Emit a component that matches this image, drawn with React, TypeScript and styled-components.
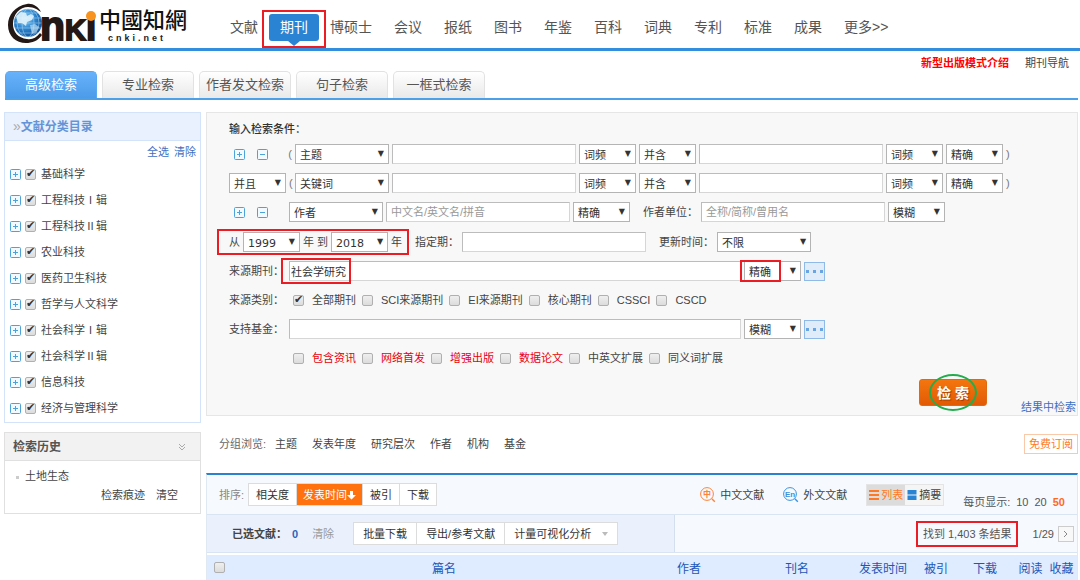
import React from "react";
import styled, { createGlobalStyle, css } from "styled-components";

const GlobalStyle = createGlobalStyle`
  *, *::before, *::after { box-sizing: border-box; }
  body {
    margin: 0;
    background: #fff;
    color: #444;
    font: 11px/14px "Liberation Sans", "Noto Sans CJK SC", sans-serif;
  }
  button, input, select { font: inherit; color: inherit; margin: 0; }
  a { color: inherit; text-decoration: none; white-space: nowrap; }
  label { white-space: nowrap; }
`;

/* red marker frame drawn over the element it belongs to */
const frame = css<{ $inset: string }>`
  position: relative;
  &::before {
    content: "";
    position: absolute;
    z-index: 1;
    inset: ${(p) => p.$inset};
    border: 2px solid #ec1c24;
    pointer-events: none;
  }
`;
const Marked = styled.div<{ $inset: string }>`
  ${frame}
  display: flex;
  align-items: center;
`;

/* ---------- header ---------- */
const Header = styled.header`
  display: flex;
  align-items: flex-start;
  height: 51px;
  border-bottom: 3px solid #338fdd;
`;
const LogoLink = styled.a`
  flex: none;
  width: 219px;
  padding-left: 7px;
`;
const LogoArt = styled.svg`
  display: block;
`;
const Nav = styled.nav`
  display: flex;
  padding-top: 14px;
`;
const NavLink = styled.a`
  padding: 0 11px;
  font-size: 14px;
  line-height: 27px;
  color: #555;
`;
const ActiveNavLink = styled(NavLink)`
  ${frame}
  color: #fff;
  background: #2b84d3;
  border-radius: 3px;
  &::after {
    content: "";
    position: absolute;
    top: 27px;
    left: 19px;
    border: 6px solid transparent;
    border-top: 5px solid #2b84d3;
    border-bottom: 0;
  }
`;
const SubLinks = styled.div`
  display: flex;
  justify-content: flex-end;
  gap: 16px;
  padding: 5px 11px 0 0;
  height: 20px;
`;
const SubLink = styled.a<{ $hot?: boolean }>`
  color: ${(p) => (p.$hot ? "#f00" : "#444")};
  font-weight: ${(p) => (p.$hot ? 700 : 400)};
`;
const Tabs = styled.nav`
  display: flex;
  gap: 5px;
  margin: 0 2px 12px 5px;
  border-bottom: 2px solid #4c9fe9;
`;
const Tab = styled.button<{ $active?: boolean }>`
  width: 92px;
  height: 27px;
  padding: 0;
  font-size: 13px;
  white-space: nowrap;
  color: ${(p) => (p.$active ? "#fff" : "#555")};
  border: 1px solid ${(p) => (p.$active ? "#5aa8f2" : "#e2e2e2")};
  border-bottom: 0;
  border-radius: 5px 5px 0 0;
  background: ${(p) =>
    p.$active ? "linear-gradient(#68b2fb, #4c9be9)" : "linear-gradient(#fff, #e9e9e9)"};
`;

/* ---------- shared controls ---------- */
const Columns = styled.div`
  display: flex;
  align-items: flex-start;
  gap: 5px;
  padding: 0 2px 0 4px;
`;
const Check = styled.input.attrs({ type: "checkbox" })`
  appearance: none;
  flex: none;
  width: 11px;
  height: 11px;
  border: 1px solid #b0b0b0;
  border-radius: 2px;
  background: linear-gradient(#efefef, #dcdcdc);
  &:checked::after {
    content: "✔";
    display: block;
    margin: -2px 0 0 0;
    font: 11px/11px "DejaVu Sans", sans-serif;
    color: #333;
  }
`;
const ToggleButton = styled.button`
  display: block;
  flex: none;
  width: 11px;
  height: 11px;
  padding: 0;
  border: 0;
  background: none;
`;
const SelectBox = styled.span<{ $wide?: boolean }>`
  display: grid;
  flex: none;
  width: ${(p) => (p.$wide ? 94 : 57)}px;
  &::after {
    content: "▼";
    grid-area: 1 / 1;
    place-self: center end;
    padding-right: 5px;
    font: 8px/10px "DejaVu Sans", sans-serif;
    color: #333;
    pointer-events: none;
  }
`;
const SelectField = styled.select`
  grid-area: 1 / 1;
  appearance: none;
  width: 100%;
  height: 20px;
  padding: 3px 4px 0;
  line-height: 15px;
  border: 1px solid #b4b4b4;
  border-radius: 0;
  background: #fff;
  color: #333;
  font-family: "DejaVu Sans", "Noto Sans CJK SC", sans-serif;
`;
const TextField = styled.input<{ $long?: boolean }>`
  flex: none;
  width: ${(p) => (p.$long ? 452 : 184)}px;
  height: 20px;
  padding: 0 ${(p) => (p.$long ? 1 : 4)}px;
  border: 1px solid #d6d6d6;
  border-top-color: #bcbcbc;
  border-left-color: #bcbcbc;
  background: #fff;
  color: #333;
  &::placeholder { color: #999; }
`;

/* ---------- sidebar ---------- */
const Sidebar = styled.aside`
  flex: none;
  width: 197px;
`;
const Box = styled.section<{ $blue?: boolean }>`
  border: 1px solid ${(p) => (p.$blue ? "#d3e3f9" : "#e0e0e0")};
  margin-bottom: 9px;
`;
const BoxHead = styled.header<{ $blue?: boolean }>`
  display: flex;
  align-items: center;
  height: 28px;
  padding: 0 14px 0 8px;
  background: ${(p) => (p.$blue ? "#e8f1fd" : "#f2f2f2")};
  border-bottom: 1px solid ${(p) => (p.$blue ? "#d3e3f9" : "#e0e0e0")};
`;
const BoxTitle = styled.h2<{ $blue?: boolean }>`
  flex: 1;
  margin: 0;
  font-size: 12px;
  line-height: 16px;
  color: ${(p) => (p.$blue ? "#6594d6" : "#555")};
`;
const Guillemet = styled.span`
  font-size: 14px;
  font-weight: 400;
  color: #aaa;
`;
const PickLinks = styled.div`
  display: flex;
  justify-content: flex-end;
  gap: 5px;
  padding: 4px 4px 2px;
  color: #3f6fc0;
`;
const Tree = styled.ul`
  list-style: none;
  margin: 0;
  padding: 0 5px 1px;
`;
const TreeItem = styled.li`
  display: flex;
  align-items: center;
  gap: 4px;
  height: 26px;
`;
const TreeLabel = styled.label`
  display: flex;
  align-items: center;
  gap: 5px;
`;
const History = styled.div`
  padding: 8px 22px 11px 11px;
`;
const HistoryLinks = styled.div`
  display: flex;
  justify-content: flex-end;
  gap: 11px;
  padding-top: 5px;
`;
const Dot = styled.span`
  display: inline-block;
  width: 3px;
  height: 3px;
  margin-right: 6px;
  vertical-align: middle;
  background: #ccc;
`;

/* ---------- search panel ---------- */
const Main = styled.main`
  flex: 1;
  min-width: 0;
`;
const Panel = styled.form`
  border: 1px solid #e6e6e6;
  background: #f8f8f8;
  padding: 9px 1px 1px 22px;
`;
const PanelTitle = styled.h1`
  margin: 0 0 8px;
  font-size: 11px;
  line-height: 14px;
  font-weight: 500;
  color: #333;
`;
const Rows = styled.div`
  display: flex;
  flex-direction: column;
  gap: 9px;
  margin-bottom: 10px;
`;
const Row = styled.div`
  display: flex;
  align-items: center;
  height: 20px;
  gap: 3px;
`;
const Lead = styled.div<{ $paren?: boolean }>`
  display: flex;
  align-items: center;
  justify-content: space-between;
  flex: none;
  width: ${(p) => (p.$paren ? 63 : 57)}px;
  gap: 3px;
`;
const Toggles = styled.div`
  display: flex;
  gap: 12px;
  padding-left: 5px;
`;
const Paren = styled.span`
  color: #777;
`;
const Label = styled.label<{ $first?: boolean }>`
  flex: none;
  ${(p) => (p.$first ? "width: 57px;" : "margin-left: 10px;")}
`;
const YearRange = styled(Marked)`
  gap: 3px;
`;
const Options = styled.div<{ $indent?: boolean }>`
  display: flex;
  gap: 6px;
  padding-left: ${(p) => (p.$indent ? 64 : 4)}px;
`;
const Option = styled.label<{ $hot?: boolean }>`
  display: flex;
  align-items: center;
  gap: 8px;
  color: ${(p) => (p.$hot ? "#e8000b" : "#444")};
`;
const MoreButton = styled.button`
  display: flex;
  align-items: center;
  justify-content: center;
  gap: 4px;
  width: 21px;
  height: 19px;
  padding: 0;
  border: 1px solid #8fb9e6;
  background: #e0ecfa;
`;
const MoreDot = styled.i`
  width: 3px;
  height: 3px;
  background: #6aa5e3;
`;
const PanelFooter = styled.div`
  display: flex;
  justify-content: flex-end;
  align-items: flex-end;
  gap: 34px;
  padding-top: 1px;
`;
const SearchButton = styled.button`
  position: relative;
  width: 68px;
  height: 27px;
  margin-bottom: 8px;
  padding: 0;
  border: 1px solid #e06a12;
  border-radius: 3px;
  background: linear-gradient(#f4760f, #e25a04);
  color: #fff;
  font-size: 14px;
  font-weight: 700;
  line-height: 20px;
  text-shadow: 1px 1px 1px #a33c00;
  &::after {
    content: "";
    position: absolute;
    inset: -6px 9px;
    border: 2px solid #22ad4c;
    border-radius: 50%;
  }
`;
const BlueLink = styled.a`
  color: #3f6fc0;
`;

/* ---------- results ---------- */
const GroupBar = styled.div`
  display: flex;
  align-items: center;
  gap: 15px;
  padding-left: 13px;
  margin: 18px 0 19px;
`;
const GroupCaption = styled.span`
  margin-right: -6px;
  color: #666;
`;
const Subscribe = styled.button`
  margin-left: auto;
  height: 20px;
  padding: 0 4px;
  border: 1px solid #fbc9aa;
  background: #fff;
  color: #ff7a26;
`;
const Results = styled.section`
  border: 1px solid #e0e8f4;
  border-top: 2px solid #2a82cf;
  border-bottom: 0;
`;
const SortBar = styled.div`
  display: flex;
  align-items: center;
  height: 40px;
  padding: 0 12px;
  background: #f6f9fe;
  border-bottom: 1px solid #d8e3f4;
`;
const Caption = styled.span`
  color: #888;
  margin-right: 4px;
`;
const Segments = styled.div`
  display: flex;
  border: 1px solid #dcdcdc;
`;
const Segment = styled.button<{ $active?: boolean; $roomy?: boolean }>`
  display: flex;
  align-items: center;
  height: 21px;
  padding: 0 ${(p) => (p.$roomy ? 9 : p.$active ? 6 : 7)}px;
  border: 0;
  border-left: 1px solid #dcdcdc;
  background: ${(p) => (p.$active ? "#ff700f" : "#fff")};
  color: ${(p) => (p.$active ? "#fff" : "#333")};
  white-space: nowrap;
  &:first-child { border-left: 0; }
`;
const SortTools = styled.div`
  display: flex;
  align-items: center;
  gap: 19px;
  margin-left: auto;
`;
const LangLink = styled.a`
  display: flex;
  align-items: center;
  gap: 4px;
`;
const ViewSwitch = styled.div`
  display: flex;
  border: 1px solid #e4e4e4;
`;
const ViewButton = styled.button<{ $active?: boolean }>`
  display: flex;
  align-items: center;
  gap: 2px;
  height: 20px;
  padding: 0 2px;
  border: 0;
  background: ${(p) => (p.$active ? "#dcdcdc" : "#f5f5f5")};
  color: ${(p) => (p.$active ? "#ff7a26" : "#444")};
`;
const PerPage = styled.div`
  display: flex;
  gap: 6px;
  padding-top: 14px;
  color: #555;
`;
const PerPageLink = styled.a<{ $active?: boolean }>`
  ${(p) => p.$active && "color: #ff6a1a; font-weight: 700;"}
`;
const ActionBar = styled.div`
  display: flex;
  height: 38px;
  margin-bottom: 2px;
  border-bottom: 1px solid #d8e3f4;
  background: #f6f9fe;
`;
const Actions = styled.div`
  display: flex;
  align-items: center;
  flex: 1;
  padding-left: 25px;
  background: #eaf1fd;
  border-right: 1px solid #d3dfef;
`;
const Chosen = styled.strong`
  color: #444;
`;
const ChosenCount = styled.strong`
  margin: 0 14px 0 5px;
  color: #2e63b8;
`;
const Clear = styled.a`
  margin-right: 19px;
  color: #999;
`;
const Caret = styled.i`
  margin-left: 11px;
  border: 3px solid transparent;
  border-top: 4px solid #bbb;
  border-bottom: 0;
`;
const Pager = styled.div`
  display: flex;
  align-items: center;
  justify-content: flex-end;
  flex: none;
  width: 402px;
  padding-right: 3px;
  color: #555;
`;
const Found = styled(Marked)`
  margin-right: 21px;
  white-space: pre;
`;
const NextButton = styled.button`
  display: grid;
  place-items: center;
  width: 16px;
  height: 16px;
  margin-left: 4px;
  padding: 0;
  border: 1px solid #ccc;
  background: #f8f8f8;
`;
const ResultTable = styled.table`
  width: 100%;
  table-layout: fixed;
  border-collapse: collapse;
  background: #dfebfe;
`;
const Th = styled.th<{ $w?: number }>`
  ${(p) => p.$w && `width: ${p.$w}px;`}
  height: 25px;
  padding: 3px 0 0;
  font-size: 12px;
  line-height: 16px;
  font-weight: 400;
  white-space: nowrap;
  color: #1e56b8;
`;
const ThCheck = styled(Th)`
  padding: 3px 0 0 7px;
  text-align: left;
`;

function Logo() {
  return (
    <LogoArt width="190" height="47" viewBox="0 0 190 47" role="img" aria-label="CNKI 中國知網">
      <defs>
        <radialGradient id="sea" cx="40%" cy="35%" r="70%">
          <stop offset="0" stopColor="#8fd0f4" />
          <stop offset="0.5" stopColor="#2f86cf" />
          <stop offset="1" stopColor="#0d4b96" />
        </radialGradient>
      </defs>
      <path d="M34 12 C31 6 25 3 20 4 C8 6 1 15 1 25 C1 36 9 43 19 43 C25 43 31 41 35 35 L33 33 C29 38 25 40 20 39 C11 38 6 32 6 24 C6 14 13 7 21 7 C27 7 31 10 34 12 Z" fill="#231815" />
      <circle cx="21" cy="23" r="14" fill="url(#sea)" />
      <g fill="none" stroke="#b9e2f8" strokeWidth="0.7" opacity="0.7">
        <ellipse cx="21" cy="23" rx="6" ry="14" />
        <ellipse cx="21" cy="23" rx="11" ry="14" />
        <path d="M8 18h26M7 23h28M8 28h26M11 33h20M11 13h20" />
      </g>
      <path d="M9 16l5-4 5 1 1 3 4-2 3 2-2 4-5 2-1 4-4-3-4 0z" fill="#e6f6fd" opacity="0.85" />
      <path d="M23 25l5-1 4 3-3 5-4 2-1-4z" fill="#d2edfa" opacity="0.6" />
      <g fill="#231815" stroke="#231815" strokeWidth="1.8" fontFamily="'Liberation Sans', sans-serif" fontWeight="700">
        <text x="33" y="40" fontSize="41">n</text>
        <text x="58" y="40" fontSize="29">K</text>
        <text x="79" y="40" fontSize="37">i</text>
      </g>
      <rect x="78" y="8" width="12" height="11" fill="#fff" />
      <circle cx="84" cy="16" r="5" fill="#f7931e" />
      <text x="92" y="28" fontSize="22" fontWeight="500" fill="#111" fontFamily="'Noto Sans CJK TC', sans-serif">中國知網</text>
      <text x="101" y="41" fontSize="9" fontWeight="700" letterSpacing="3" fill="#222" fontFamily="'Liberation Sans', sans-serif">cnki.net</text>
    </LogoArt>
  );
}

function Toggle({ minus = false, name }: { minus?: boolean; name: string }) {
  return (
    <ToggleButton type="button" aria-label={name}>
      <svg width="11" height="11" viewBox="0 0 11 11" fill="none" stroke="#4ba3d9">
        <rect x="0.5" y="0.5" width="10" height="10" rx="1" fill="#f2faff" />
        <path d={minus ? "M3 5.5h5" : "M3 5.5h5M5.5 3v5"} />
      </svg>
    </ToggleButton>
  );
}

function Select({ options, wide, label }: { options: string[]; wide?: boolean; label: string }) {
  return (
    <SelectBox $wide={wide}>
      <SelectField aria-label={label}>
        {options.map((o) => (
          <option key={o}>{o}</option>
        ))}
      </SelectField>
    </SelectBox>
  );
}

function More({ name }: { name: string }) {
  return (
    <MoreButton type="button" aria-label={name}>
      <MoreDot />
      <MoreDot />
      <MoreDot />
    </MoreButton>
  );
}

function TermFields({ field }: { field: string }) {
  return (
    <>
      <Select wide options={[field]} label="检索项" />
      <TextField aria-label="检索词" />
      <Select options={["词频"]} label="词频" />
      <Select options={["并含"]} label="逻辑" />
      <TextField aria-label="第二检索词" />
      <Select options={["词频"]} label="第二词频" />
      <Select options={["精确"]} label="匹配" />
      <Paren>)</Paren>
    </>
  );
}

function LangIcon({ color, text }: { color: string; text: string }) {
  return (
    <svg width="16" height="16" viewBox="0 0 16 16" aria-hidden="true">
      <circle cx="7" cy="7" r="6.4" fill="none" stroke={color} />
      <path d="M11.8 11.8l3 3" stroke={color} strokeWidth="1.4" />
      <text x="7" y="10" textAnchor="middle" fontSize="8" fontWeight="700" fill={color} fontFamily="'Liberation Sans', 'Noto Sans CJK SC', sans-serif">
        {text}
      </text>
    </svg>
  );
}

const navRest = ["博硕士", "会议", "报纸", "图书", "年鉴", "百科", "词典", "专利", "标准", "成果", "更多>>"];
const tabs = ["高级检索", "专业检索", "作者发文检索", "句子检索", "一框式检索"];
const subjects = ["基础科学", "工程科技Ⅰ辑", "工程科技Ⅱ辑", "农业科技", "医药卫生科技", "哲学与人文科学", "社会科学Ⅰ辑", "社会科学Ⅱ辑", "信息科技", "经济与管理科学"];
const sources = ["全部期刊", "SCI来源期刊", "EI来源期刊", "核心期刊", "CSSCI", "CSCD"];
const extras = ["包含资讯", "网络首发", "增强出版", "数据论文", "中英文扩展", "同义词扩展"];
const groups = ["主题", "发表年度", "研究层次", "作者", "机构", "基金"];

export default function App() {
  return (
    <>
      <GlobalStyle />
      <Header>
        <LogoLink href="#"><Logo /></LogoLink>
        <Nav>
          <NavLink href="#">文献</NavLink>
          <ActiveNavLink href="#" $inset="-4px -7px -7px">期刊</ActiveNavLink>
          {navRest.map((n) => <NavLink href="#" key={n}>{n}</NavLink>)}
        </Nav>
      </Header>
      <SubLinks>
        <SubLink href="#" $hot>新型出版模式介绍</SubLink>
        <SubLink href="#">期刊导航</SubLink>
      </SubLinks>
      <Tabs>
        {tabs.map((t, i) => <Tab key={t} $active={i === 0}>{t}</Tab>)}
      </Tabs>

      <Columns>
        <Sidebar>
          <Box $blue>
            <BoxHead $blue>
              <BoxTitle $blue><Guillemet>»</Guillemet>文献分类目录</BoxTitle>
            </BoxHead>
            <PickLinks><a href="#">全选</a><a href="#">清除</a></PickLinks>
            <Tree>
              {subjects.map((s) => (
                <TreeItem key={s}>
                  <Toggle name={"展开" + s} />
                  <TreeLabel><Check defaultChecked />{s}</TreeLabel>
                </TreeItem>
              ))}
            </Tree>
          </Box>
          <Box>
            <BoxHead>
              <BoxTitle>检索历史</BoxTitle>
              <svg width="8" height="8" viewBox="0 0 8 8" fill="none" stroke="#aaa" aria-hidden="true">
                <path d="M1 1l3 3 3-3M1 4l3 3 3-3" />
              </svg>
            </BoxHead>
            <History>
              <a href="#"><Dot />土地生态</a>
              <HistoryLinks><a href="#">检索痕迹</a><a href="#">清空</a></HistoryLinks>
            </History>
          </Box>
        </Sidebar>

        <Main>
          <Panel>
            <PanelTitle>输入检索条件：</PanelTitle>
            <Rows>
              <Row>
                <Lead $paren>
                  <Toggles><Toggle name="增加条件" /><Toggle minus name="减少条件" /></Toggles>
                  <Paren>(</Paren>
                </Lead>
                <TermFields field="主题" />
              </Row>
              <Row>
                <Lead $paren>
                  <Select options={["并且"]} label="条件关系" />
                  <Paren>(</Paren>
                </Lead>
                <TermFields field="关键词" />
              </Row>
              <Row>
                <Lead>
                  <Toggles><Toggle name="增加作者" /><Toggle minus name="减少作者" /></Toggles>
                </Lead>
                <Select wide options={["作者"]} label="作者类型" />
                <TextField placeholder="中文名/英文名/拼音" aria-label="作者姓名" />
                <Select options={["精确"]} label="作者匹配" />
                <Label htmlFor="unit">作者单位：</Label>
                <TextField id="unit" placeholder="全称/简称/曾用名" />
                <Select options={["模糊"]} label="单位匹配" />
              </Row>
            </Rows>
            <Rows>
              <Row>
                <YearRange $inset="-3px -7px -3px -12px">
                  从 <Select options={["1999"]} label="起始年" />
                  年 到 <Select options={["2018"]} label="结束年" />
                  年
                </YearRange>
                <Label htmlFor="issue">指定期：</Label>
                <TextField id="issue" />
                <Label htmlFor="updated">更新时间：</Label>
                <SelectBox $wide>
                  <SelectField id="updated"><option>不限</option></SelectField>
                </SelectBox>
              </Row>
              <Row>
                <Label $first htmlFor="journal">来源期刊：</Label>
                <Marked $inset="-3px 390px -3px -8px">
                  <TextField id="journal" $long defaultValue="社会学研究" />
                </Marked>
                <Marked $inset="-1px 20px -1px -4px">
                  <Select options={["精确"]} label="期刊匹配" />
                </Marked>
                <More name="选择期刊" />
              </Row>
              <Row>
                <Label as="span" $first>来源类别：</Label>
                <Options>
                  {sources.map((s, i) => (
                    <Option key={s}><Check defaultChecked={i === 0} />{s}</Option>
                  ))}
                </Options>
              </Row>
              <Row>
                <Label $first htmlFor="fund">支持基金：</Label>
                <TextField id="fund" $long />
                <Select options={["模糊"]} label="基金匹配" />
                <More name="选择基金" />
              </Row>
              <Row>
                <Options $indent>
                  {extras.map((s, i) => (
                    <Option key={s} $hot={i < 4}><Check />{s}</Option>
                  ))}
                </Options>
              </Row>
            </Rows>
            <PanelFooter>
              <SearchButton type="button">检 索</SearchButton>
              <BlueLink href="#">结果中检索</BlueLink>
            </PanelFooter>
          </Panel>

          <GroupBar>
            <GroupCaption>分组浏览:</GroupCaption>
            {groups.map((g) => <a href="#" key={g}>{g}</a>)}
            <Subscribe>免费订阅</Subscribe>
          </GroupBar>

          <Results>
            <SortBar>
              <Caption>排序:</Caption>
              <Segments>
                <Segment>相关度</Segment>
                <Segment $active>
                  发表时间
                  <svg width="9" height="10" viewBox="0 0 9 10" aria-hidden="true">
                    <path d="M3 1h3v4h3L4.500 9.500 0 5h3z" fill="#fff" />
                  </svg>
                </Segment>
                <Segment>被引</Segment>
                <Segment>下载</Segment>
              </Segments>
              <SortTools>
                <LangLink href="#"><LangIcon color="#ff8238" text="中" />中文文献</LangLink>
                <LangLink href="#"><LangIcon color="#3b93dc" text="En" />外文文献</LangLink>
                <ViewSwitch>
                  <ViewButton $active>
                    <svg width="10" height="10" viewBox="0 0 10 10" aria-hidden="true">
                      <path d="M0 1h10M0 5h10M0 9h10" stroke="#ff7a26" strokeWidth="2" />
                    </svg>
                    列表
                  </ViewButton>
                  <ViewButton>
                    <svg width="10" height="10" viewBox="0 0 10 10" aria-hidden="true">
                      <path d="M0.500 0h9v4.500h-9zM0.500 5.500h9V10h-9z" fill="#2b84d3" />
                    </svg>
                    摘要
                  </ViewButton>
                </ViewSwitch>
                <PerPage>
                  <span>每页显示:</span>
                  <PerPageLink href="#">10</PerPageLink>
                  <PerPageLink href="#">20</PerPageLink>
                  <PerPageLink href="#" $active>50</PerPageLink>
                </PerPage>
              </SortTools>
            </SortBar>
            <ActionBar>
              <Actions>
                <Chosen>已选文献：</Chosen>
                <ChosenCount>0</ChosenCount>
                <Clear href="#">清除</Clear>
                <Segments>
                  <Segment $roomy>批量下载</Segment>
                  <Segment $roomy>导出/参考文献</Segment>
                  <Segment $roomy>计量可视化分析<Caret /></Segment>
                </Segments>
              </Actions>
              <Pager>
                <Found $inset="-6px -6px -6px -7px">找到 1,403 条结果</Found>
                <span>1/29</span>
                <NextButton aria-label="下一页">
                  <svg width="6" height="8" viewBox="0 0 6 8" fill="none" stroke="#888" aria-hidden="true">
                    <path d="M1 1l3 3-3 3" />
                  </svg>
                </NextButton>
              </Pager>
            </ActionBar>
            <ResultTable>
              <thead>
                <tr>
                  <ThCheck $w={48}><Check aria-label="全选结果" /></ThCheck>
                  <Th>篇名</Th>
                  <Th $w={112}>作者</Th>
                  <Th $w={104}>刊名</Th>
                  <Th $w={68}>发表时间</Th>
                  <Th $w={38}>被引</Th>
                  <Th $w={60}>下载</Th>
                  <Th $w={31}>阅读</Th>
                  <Th $w={31}>收藏</Th>
                </tr>
              </thead>
            </ResultTable>
          </Results>
        </Main>
      </Columns>
    </>
  );
}
